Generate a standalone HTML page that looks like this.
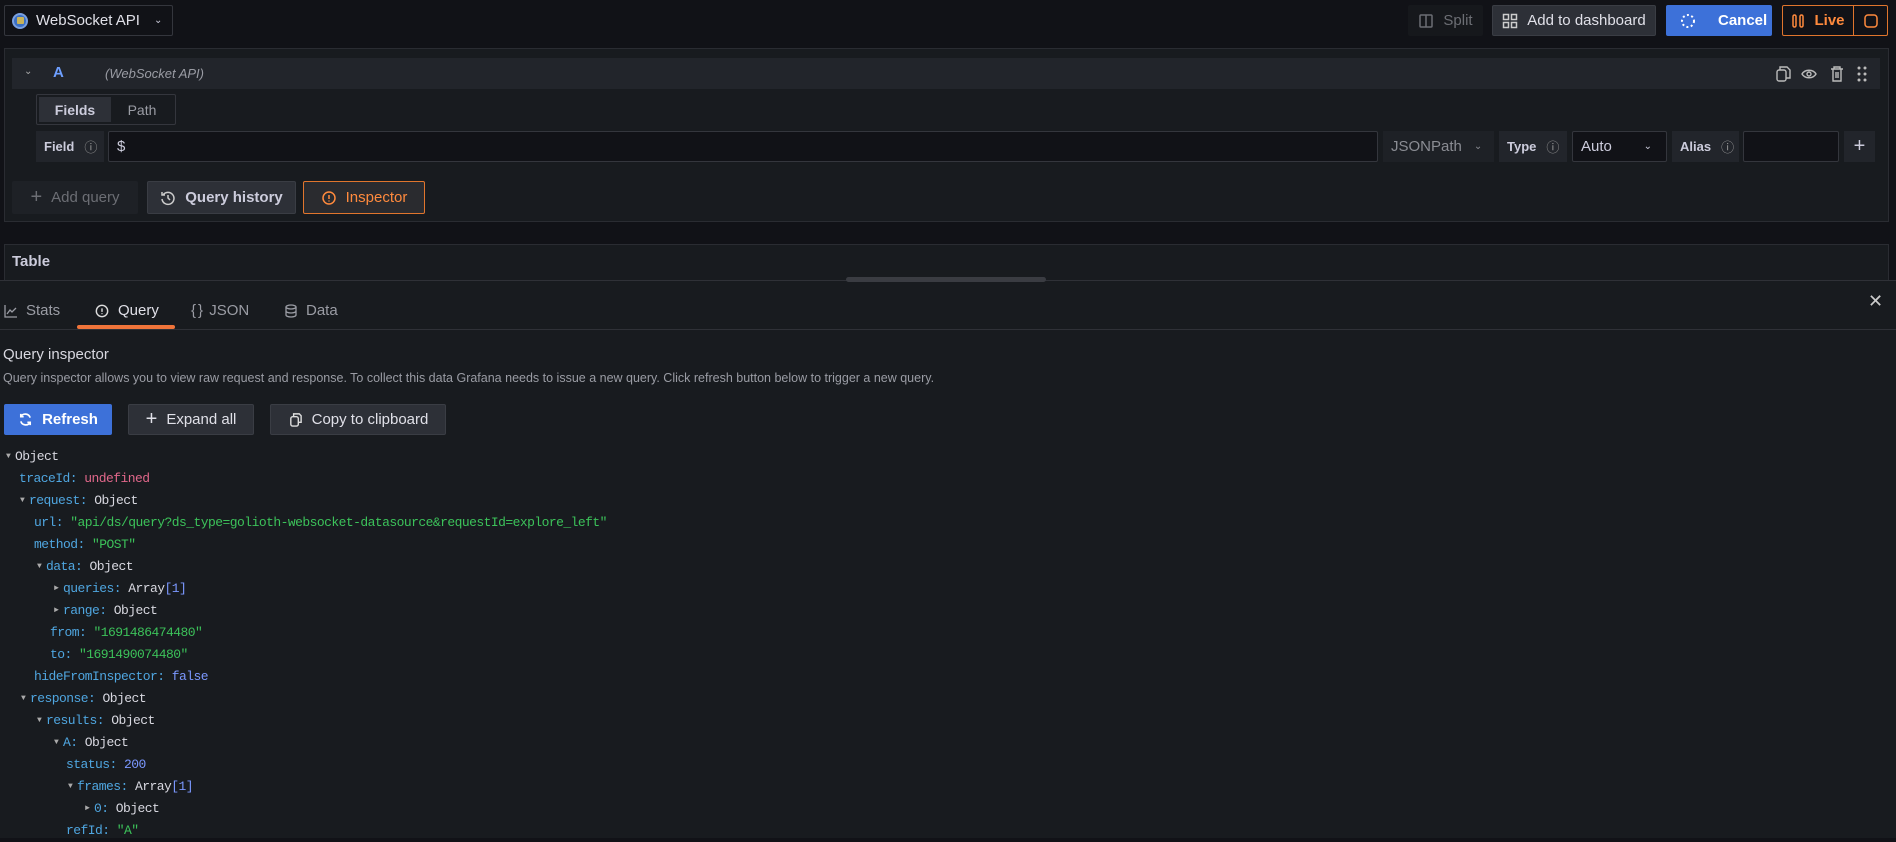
<!DOCTYPE html>
<html><head><meta charset="utf-8"><style>
*{box-sizing:border-box;margin:0;padding:0}
body{width:1896px;height:838px;background:#111217;font-family:"Liberation Sans",sans-serif;color:#ccccdc;position:relative;overflow:hidden;font-size:16px}
.a{position:absolute}
.btn{position:absolute;display:flex;align-items:center;justify-content:center;gap:9px;border-radius:2px;font-weight:bold;font-size:15px}
.sec{background:#2d3037;border:1px solid #3a3d44;color:#ccccdc}
.lbl{position:absolute;background:#22252b;display:flex;align-items:center;padding-left:8px;font-weight:bold;font-size:13px;color:#ccccdc;gap:10px}
.inp{position:absolute;background:#111217;border:1px solid #34363d;border-radius:2px;display:flex;align-items:center;padding-left:8px}
svg{display:block}
.json{position:absolute;left:0;top:446px;width:900px;font-family:"Liberation Mono",monospace;font-size:13px;letter-spacing:-0.55px;line-height:22px}
.json div{white-space:pre;height:22px;position:relative}
.k{color:#4fa6e0}.s{color:#3cc25a}.u{color:#e0678a}.n{color:#7b98ff}.o{color:#d8d8e0}
.t{position:absolute;margin-left:-9px;color:#aaa;font-size:8px;letter-spacing:0}
</style></head><body>

<!-- top bar -->
<div class="a" style="left:4px;top:5px;width:169px;height:31px;border:1px solid #34363d;border-radius:2px;display:flex;align-items:center;padding-left:7px;gap:8px;font-size:15px">
<div style="width:16px;height:16px;border-radius:50%;background:#3b6fc4;border:2px solid #7aa0e0;display:flex;align-items:center;justify-content:center"><div style="width:7px;height:7px;background:#c9b35a;border-radius:1px"></div></div>
<span style="color:#e0e0e8">WebSocket API</span><span style="font-size:10px;margin-left:6px">&#8964;</span></div>

<div class="btn" style="left:1408px;top:5px;width:75px;height:31px;background:#16181c;color:#6c6e74;font-weight:normal">
<svg width="16" height="16" viewBox="0 0 16 16" fill="none" stroke="#6c6e74" stroke-width="1.5"><rect x="2" y="2" width="12" height="12" rx="1"/><path d="M8 2v12"/></svg>Split</div>
<div class="btn sec" style="left:1492px;top:5px;width:164px;height:31px;font-weight:normal;color:#e0e0e8">
<svg width="16" height="16" viewBox="0 0 16 16" fill="none" stroke="#ccc" stroke-width="1.5"><rect x="1.5" y="1.5" width="5" height="5"/><rect x="9.5" y="1.5" width="5" height="5"/><rect x="1.5" y="9.5" width="5" height="5"/><rect x="9.5" y="9.5" width="5" height="5"/></svg>Add to dashboard</div>
<div class="btn" style="left:1666px;top:5px;width:106px;height:31px;background:#3d71d9;color:#fff;gap:22px;justify-content:flex-start;padding-left:14px">
<svg width="16" height="16" viewBox="0 0 16 16" fill="none" stroke="#fff" stroke-width="2" stroke-dasharray="2 2.5"><circle cx="8" cy="8" r="6"/></svg>Cancel</div>
<div class="btn" style="left:1782px;top:5px;width:72px;height:31px;border:1px solid #e0752d;color:#ff8a3d;border-radius:2px 0 0 2px">
<svg width="14" height="16" viewBox="0 0 14 16" fill="none" stroke="#ff8a3d" stroke-width="1.5"><rect x="2" y="2" width="3" height="12" rx="1.5"/><rect x="9" y="2" width="3" height="12" rx="1.5"/></svg>Live</div>
<div class="btn" style="left:1853px;top:5px;width:35px;height:31px;border:1px solid #e0752d;border-radius:0 2px 2px 0">
<svg width="16" height="16" viewBox="0 0 16 16" fill="none" stroke="#ff8a3d" stroke-width="1.5"><rect x="2" y="2" width="12" height="12" rx="3"/></svg></div>

<!-- query panel -->
<div class="a" style="left:4px;top:48px;width:1885px;height:174px;background:#181b1f;border:1px solid #2a2c32"></div>
<div class="a" style="left:12px;top:58px;width:1868px;height:31px;background:#22252b"></div>
<div class="a" style="left:24px;top:66px;font-size:10px;color:#aaa">&#8964;</div>
<div class="a" style="left:53px;top:64px;font-weight:bold;color:#6e9fff;font-size:15px">A</div>
<div class="a" style="left:105px;top:66px;font-style:italic;color:#9a9ca4;font-size:13px">(WebSocket API)</div>
<svg class="a" style="left:1773px;top:64px" width="100" height="20" viewBox="0 0 100 20" fill="none" stroke="#bbb" stroke-width="1.4">
<rect x="4" y="6" width="9" height="11" rx="2"/><path d="M7 6V3h7l3 3v8h-4"/>
<path d="M29 10c3-5 11-5 14 0c-3 5-11 5-14 0z"/><circle cx="36" cy="10" r="2"/>
<path d="M58 5h12M61 5V3h6v2M60 5v12h8V5M63 8v6M65 8v6"/>
<g fill="#bbb" stroke="none"><circle cx="86" cy="4" r="1.5"/><circle cx="92" cy="4" r="1.5"/><circle cx="86" cy="10" r="1.5"/><circle cx="92" cy="10" r="1.5"/><circle cx="86" cy="16" r="1.5"/><circle cx="92" cy="16" r="1.5"/></g></svg>

<div class="a" style="left:36px;top:94px;width:140px;height:31px;border:1px solid #34363d;border-radius:2px"></div>
<div class="a" style="left:39px;top:97px;width:72px;height:25px;background:#2d3037;display:flex;align-items:center;justify-content:center;font-weight:bold;font-size:14px">Fields</div>
<div class="a" style="left:111px;top:97px;width:62px;height:25px;display:flex;align-items:center;justify-content:center;font-size:14px;color:#9a9ca4">Path</div>

<div class="lbl" style="left:36px;top:131px;width:68px;height:31px">Field <span style="font-weight:normal;color:#999">&#9432;</span></div>
<div class="inp" style="left:108px;top:131px;width:1270px;height:31px;font-size:15px">$</div>
<div class="lbl" style="left:1383px;top:131px;width:111px;height:31px;font-weight:normal;font-size:15px;color:#8a8c93;gap:12px;background:#1e2126">JSONPath <span style="font-size:10px">&#8964;</span></div>
<div class="lbl" style="left:1499px;top:131px;width:68px;height:31px">Type <span style="font-weight:normal;color:#999">&#9432;</span></div>
<div class="inp" style="left:1572px;top:131px;width:95px;height:31px;font-size:15px;justify-content:space-between;padding-right:14px">Auto<span style="font-size:10px">&#8964;</span></div>
<div class="lbl" style="left:1672px;top:131px;width:67px;height:31px">Alias <span style="font-weight:normal;color:#999">&#9432;</span></div>
<div class="inp" style="left:1743px;top:131px;width:96px;height:31px"></div>
<div class="lbl" style="left:1844px;top:131px;width:31px;height:31px;padding:0;justify-content:center;font-size:20px;font-weight:normal">+</div>

<div class="btn" style="left:12px;top:181px;width:126px;height:33px;background:#1e2126;color:#6c6e74;font-weight:normal"><span style="font-size:20px">+</span>Add query</div>
<div class="btn sec" style="left:147px;top:181px;width:149px;height:33px">
<svg width="16" height="16" viewBox="0 0 16 16" fill="none" stroke="#ccc" stroke-width="1.5"><path d="M3 5a6 6 0 1 1-1 4"/><path d="M2 2v3h3"/><path d="M8 5v3l2 2"/></svg>Query history</div>
<div class="btn" style="left:303px;top:181px;width:122px;height:33px;background:#2a2b2f;border:1px solid #e0752d;color:#ff8a3d;font-weight:normal">
<svg width="16" height="16" viewBox="0 0 16 16" fill="none" stroke="#ff8a3d" stroke-width="1.5"><circle cx="8" cy="8" r="6"/><path d="M8 5v4M8 10.5v1"/></svg>Inspector</div>

<!-- table panel -->
<div class="a" style="left:4px;top:244px;width:1885px;height:40px;background:#181b1f;border:1px solid #2a2c32"></div>
<div class="a" style="left:12px;top:253px;font-weight:bold;font-size:15px">Table</div>

<!-- drawer -->
<div class="a" style="left:0;top:280px;width:1896px;height:558px;background:#181b1f;border-top:1px solid #2f3137"></div>
<div class="a" style="left:846px;top:277px;width:200px;height:5px;background:#3a3c42;border-radius:3px"></div>
<div class="a" style="left:1868px;top:291px;font-size:18px;color:#ccc">&#10005;</div>

<div class="a" style="left:0;top:329px;width:1896px;height:1px;background:#2f3137"></div>
<div class="a" style="left:77px;top:325px;width:98px;height:4px;background:#f0743a;border-radius:2px"></div>
<div class="a" style="left:4px;top:302px;display:flex;align-items:center;gap:8px;color:#9a9ca4;font-size:15px">
<svg width="14" height="14" viewBox="0 0 14 14" fill="none" stroke="#9a9ca4" stroke-width="1.3"><path d="M1 1v12h12M3 10l3-4 2 2 4-4"/></svg>Stats</div>
<div class="a" style="left:95px;top:302px;display:flex;align-items:center;gap:9px;color:#e0e0e8;font-size:15px">
<svg width="14" height="14" viewBox="0 0 16 16" fill="none" stroke="#ddd" stroke-width="1.6"><circle cx="8" cy="8" r="6.5"/><path d="M8 5v4M8 10.5v1"/></svg>Query</div>
<div class="a" style="left:191px;top:302px;color:#9a9ca4;font-size:15px"><span style="letter-spacing:2px">{}</span> JSON</div>
<div class="a" style="left:285px;top:302px;display:flex;align-items:center;gap:9px;color:#9a9ca4;font-size:15px">
<svg width="12" height="14" viewBox="0 0 12 14" fill="none" stroke="#9a9ca4" stroke-width="1.3"><ellipse cx="6" cy="3" rx="5" ry="2"/><path d="M1 3v8c0 1 2 2 5 2s5-1 5-2V3M1 7c0 1 2 2 5 2s5-1 5-2"/></svg>Data</div>

<div class="a" style="left:3px;top:346px;font-size:15px;color:#d8d8e0">Query inspector</div>
<div class="a" style="left:3px;top:371px;font-size:12.5px;color:#9a9ca4">Query inspector allows you to view raw request and response. To collect this data Grafana needs to issue a new query. Click refresh button below to trigger a new query.</div>

<div class="btn" style="left:4px;top:404px;width:108px;height:31px;background:#3d71d9;color:#fff">
<svg width="15" height="15" viewBox="0 0 16 16" fill="none" stroke="#fff" stroke-width="1.8"><path d="M13 6A5.5 5.5 0 0 0 3 5M3 10a5.5 5.5 0 0 0 10 1"/><path d="M3 2v3h3M13 14v-3h-3"/></svg>Refresh</div>
<div class="btn sec" style="left:128px;top:404px;width:126px;height:31px;font-weight:normal;color:#e0e0e8"><span style="font-size:20px">+</span>Expand all</div>
<div class="btn sec" style="left:270px;top:404px;width:176px;height:31px;font-weight:normal;color:#e0e0e8">
<svg width="15" height="15" viewBox="0 0 16 16" fill="none" stroke="#ddd" stroke-width="1.5"><rect x="3" y="5" width="8" height="10" rx="2"/><path d="M6 5V2h6l2 2v7h-3"/></svg>Copy to clipboard</div>

<div class="json">
<div style="padding-left:15px"><span class="t">&#9660;</span><span class="o">Object</span></div>
<div style="padding-left:19px"><span class="k">traceId:</span> <span class="u">undefined</span></div>
<div style="padding-left:29px"><span class="t">&#9660;</span><span class="k">request:</span> <span class="o">Object</span></div>
<div style="padding-left:34px"><span class="k">url:</span> <span class="s">"api/ds/query?ds_type=golioth-websocket-datasource&amp;requestId=explore_left"</span></div>
<div style="padding-left:34px"><span class="k">method:</span> <span class="s">"POST"</span></div>
<div style="padding-left:46px"><span class="t">&#9660;</span><span class="k">data:</span> <span class="o">Object</span></div>
<div style="padding-left:63px"><span class="t">&#9658;</span><span class="k">queries:</span> <span class="o">Array</span><span class="n">[1]</span></div>
<div style="padding-left:63px"><span class="t">&#9658;</span><span class="k">range:</span> <span class="o">Object</span></div>
<div style="padding-left:50px"><span class="k">from:</span> <span class="s">"1691486474480"</span></div>
<div style="padding-left:50px"><span class="k">to:</span> <span class="s">"1691490074480"</span></div>
<div style="padding-left:34px"><span class="k">hideFromInspector:</span> <span class="n">false</span></div>
<div style="padding-left:30px"><span class="t">&#9660;</span><span class="k">response:</span> <span class="o">Object</span></div>
<div style="padding-left:46px"><span class="t">&#9660;</span><span class="k">results:</span> <span class="o">Object</span></div>
<div style="padding-left:63px"><span class="t">&#9660;</span><span class="k">A:</span> <span class="o">Object</span></div>
<div style="padding-left:66px"><span class="k">status:</span> <span class="n">200</span></div>
<div style="padding-left:77px"><span class="t">&#9660;</span><span class="k">frames:</span> <span class="o">Array</span><span class="n">[1]</span></div>
<div style="padding-left:94px"><span class="t">&#9658;</span><span class="k">0:</span> <span class="o">Object</span></div>
<div style="padding-left:66px"><span class="k">refId:</span> <span class="s">"A"</span></div>
</div>
</body></html>
